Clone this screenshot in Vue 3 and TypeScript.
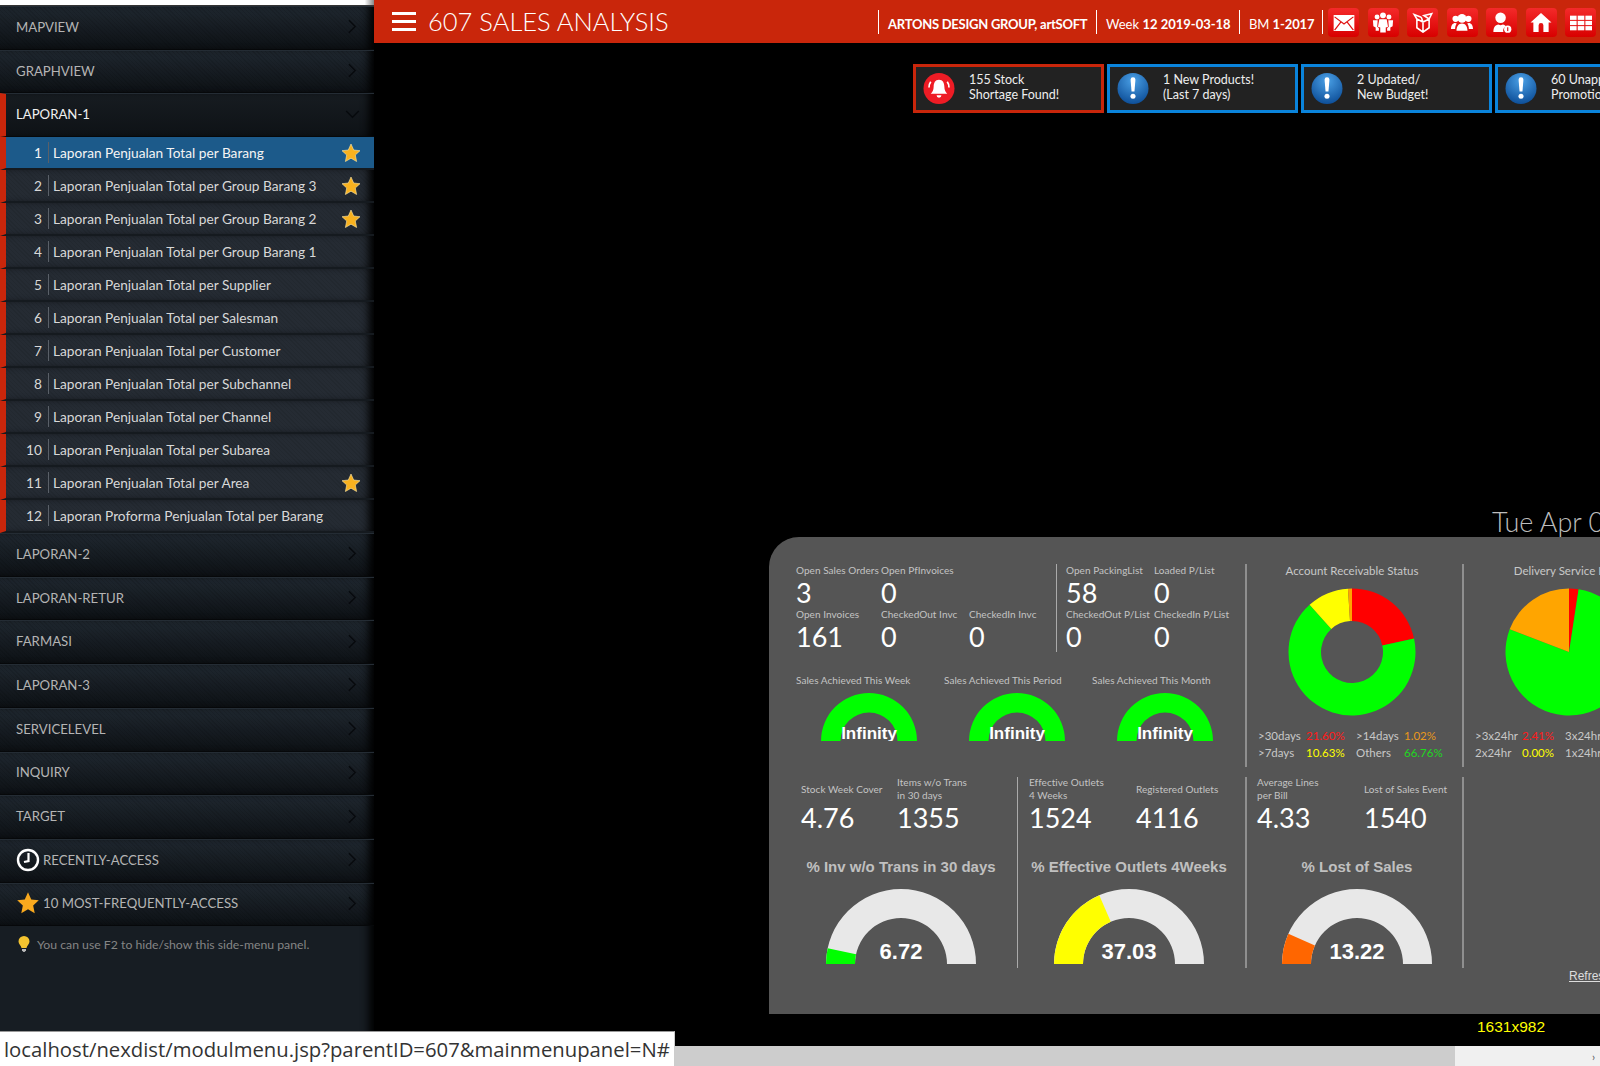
<script setup lang="ts">
interface Sub { n: number; label: string; star: boolean }
interface Stat { label: string; value: string }
const before: string[] = ['MAPVIEW', 'GRAPHVIEW']
const subs: Sub[] = [
  { n: 1, label: 'Laporan Penjualan Total per Barang', star: true },
  { n: 2, label: 'Laporan Penjualan Total per Group Barang 3', star: true },
  { n: 3, label: 'Laporan Penjualan Total per Group Barang 2', star: true },
  { n: 4, label: 'Laporan Penjualan Total per Group Barang 1', star: false },
  { n: 5, label: 'Laporan Penjualan Total per Supplier', star: false },
  { n: 6, label: 'Laporan Penjualan Total per Salesman', star: false },
  { n: 7, label: 'Laporan Penjualan Total per Customer', star: false },
  { n: 8, label: 'Laporan Penjualan Total per Subchannel', star: false },
  { n: 9, label: 'Laporan Penjualan Total per Channel', star: false },
  { n: 10, label: 'Laporan Penjualan Total per Subarea', star: false },
  { n: 11, label: 'Laporan Penjualan Total per Area', star: true },
  { n: 12, label: 'Laporan Proforma Penjualan Total per Barang', star: false },
]
const after: string[] = ['LAPORAN-2', 'LAPORAN-RETUR', 'FARMASI', 'LAPORAN-3', 'SERVICELEVEL', 'INQUIRY', 'TARGET']
const notes = [
  { a: '155 Stock', b: 'Shortage Found!', kind: 'alert' },
  { a: '1 New Products!', b: '(Last 7 days)', kind: 'info' },
  { a: '2 Updated/', b: 'New Budget!', kind: 'info' },
  { a: '60 Unapproved', b: 'Promotions!', kind: 'info' },
]
const stats1: Stat[] = [
  { label: 'Open Sales Orders', value: '3' }, { label: 'Open PfInvoices', value: '0' }, { label: '', value: '' },
  { label: 'Open Invoices', value: '161' }, { label: 'CheckedOut Invc', value: '0' }, { label: 'CheckedIn Invc', value: '0' },
]
const stats2: Stat[] = [
  { label: 'Open PackingList', value: '58' }, { label: 'Loaded P/List', value: '0' },
  { label: 'CheckedOut P/List', value: '0' }, { label: 'CheckedIn P/List', value: '0' },
]
const achieved: string[] = ['Sales Achieved This Week', 'Sales Achieved This Period', 'Sales Achieved This Month']

function polar(cx: number, cy: number, r: number, turn: number): string {
  const a = turn * Math.PI * 2
  return `${(cx + r * Math.sin(a)).toFixed(2)} ${(cy - r * Math.cos(a)).toFixed(2)}`
}
function ring(cx: number, cy: number, R: number, r: number, from: number, to: number): string {
  const large = to - from > 0.5 ? 1 : 0
  if (r === 0) return `M${cx} ${cy}L${polar(cx, cy, R, from)}A${R} ${R} 0 ${large} 1 ${polar(cx, cy, R, to)}Z`
  return `M${polar(cx, cy, R, from)}A${R} ${R} 0 ${large} 1 ${polar(cx, cy, R, to)}L${polar(cx, cy, r, to)}A${r} ${r} 0 ${large} 0 ${polar(cx, cy, r, from)}Z`
}
const donut = [
  { d: ring(64, 64, 63.5, 31, 0, 0.216), c: '#ff0000' },
  { d: ring(64, 64, 63.5, 31, 0.216, 0.8836), c: '#00ff00' },
  { d: ring(64, 64, 63.5, 31, 0.8836, 0.9899), c: '#ffff00' },
  { d: ring(64, 64, 63.5, 31, 0.9899, 1), c: '#ffa500' },
]
const pie = [
  { d: ring(64, 64, 63.5, 0, 0, 0.0241), c: '#ff0000' },
  { d: ring(64, 64, 63.5, 0, 0.0241, 0.808), c: '#00ff00' },
  { d: ring(64, 64, 63.5, 0, 0.808, 1), c: '#ffa500' },
]
const greenArc = ring(73, 49, 48, 28.5, 0.75, 1.25)
const kpis = [
  { cls: 'a', cols: [{ l: ['Stock Week Cover'], v: '4.76' }, { l: ['Items w/o Trans', 'in 30 days'], v: '1355' }], t: '% Inv w/o Trans in 30 days', val: 6.72, c: '#00ff00' },
  { cls: 'b', cols: [{ l: ['Effective Outlets', '4 Weeks'], v: '1524' }, { l: ['Registered Outlets'], v: '4116' }], t: '% Effective Outlets 4Weeks', val: 37.03, c: '#ffff00' },
  { cls: 'c', cols: [{ l: ['Average Lines', 'per Bill'], v: '4.33' }, { l: ['Lost of Sales Event'], v: '1540' }], t: '% Lost of Sales', val: 13.22, c: '#ff6600' },
]
const track = ring(75, 75, 75, 46, 0.75, 1.25)
function fill(v: number): string {
  return ring(75, 75, 75, 46, 0.75, 0.75 + v / 200)
}
const starPts = '10,1 12.7,7 19,7.7 14.3,12 15.6,18.5 10,15.2 4.4,18.5 5.7,12 1,7.7 7.3,7'
</script>

<template>
  <div class="page">
    <aside class="side">
      <div class="topstrip"></div>
      <div v-for="h in before" :key="h" class="head">
        <span>{{ h }}</span>
        <svg class="chev" viewBox="0 0 10 16"><path d="M1 1l7 7-7 7" /></svg>
      </div>
      <div class="head open">
        <span>LAPORAN-1</span>
        <svg class="chevd" viewBox="0 0 16 10"><path d="M1 1l7 7 7-7" /></svg>
      </div>
      <div v-for="s in subs" :key="s.n" class="sub" :class="{ on: s.n === 1 }">
        <span class="num">{{ s.n }}</span>
        <span class="lbl">{{ s.label }}</span>
        <svg v-if="s.star" class="star" viewBox="0 0 20 20"><polygon :points="starPts" /></svg>
      </div>
      <div v-for="h in after" :key="h" class="head">
        <span>{{ h }}</span>
        <svg class="chev" viewBox="0 0 10 16"><path d="M1 1l7 7-7 7" /></svg>
      </div>
      <div class="head iconed">
        <svg class="bigicon" viewBox="0 0 24 24"><circle cx="12" cy="12" r="10" fill="none" stroke="#fff" stroke-width="2.400" /><path d="M12.500 5v8l-4.500 1" fill="none" stroke="#fff" stroke-width="2.200" /></svg>
        <span>RECENTLY-ACCESS</span>
        <svg class="chev" viewBox="0 0 10 16"><path d="M1 1l7 7-7 7" /></svg>
      </div>
      <div class="head iconed">
        <svg class="bigicon" viewBox="0 0 20 20"><polygon class="goldfill" :points="starPts" /></svg>
        <span>10 MOST-FREQUENTLY-ACCESS</span>
        <svg class="chev" viewBox="0 0 10 16"><path d="M1 1l7 7-7 7" /></svg>
      </div>
      <div class="hint">
        <svg class="bulb" viewBox="0 0 12 16"><path d="M6 0a5.500 5.500 0 0 1 5.500 5.500c0 2.600-2.500 4-3 6.500h-5c-.5-2.500-3-3.900-3-6.500A5.500 5.500 0 0 1 6 0z" fill="#f4c430" /><path d="M4 13h4v1.500L6.500 16h-1L4 14.500z" fill="#bbb" /></svg>
        <span>You can use F2 to hide/show this side-menu panel.</span>
      </div>
    </aside>

    <main class="main">
      <header class="bar">
        <div class="burger"><i></i><i></i><i></i></div>
        <div class="title">607 SALES ANALYSIS</div>
        <div class="meta m1"><b>ARTONS DESIGN GROUP, artSOFT</b></div>
        <div class="meta m2">Week <b>12 2019-03-18</b></div>
        <div class="meta m3">BM <b>1-2017</b></div>
        <div class="tools">
          <button class="tool"><svg class="wide" viewBox="0 0 22 17"><rect x="0" y="0" width="22" height="17" fill="#fff" /><path d="M1 2l10 7.500L21 2M1 16l7-9M21 16l-7-9" fill="none" stroke="#e01010" stroke-width="1.300" /></svg></button>
          <button class="tool"><svg viewBox="0 0 24 22" fill="#fff"><circle cx="12" cy="3.200" r="3.200" /><circle cx="5.500" cy="5" r="2.700" /><circle cx="18.500" cy="5" r="2.700" /><path d="M8 7.500h8l1.500 8-2.500 1v5.500H9v-5.500l-2.500-1z" /><path d="M1 8.500h5.200l-.5 7 1.800 1.500v3H4v-3.500l-2.500-1.500zM23 8.500h-5.200l.5 7-1.800 1.500v3H20v-3.500l2.500-1.500z" /></svg></button>
          <button class="tool"><svg viewBox="0 0 22 24" fill="none" stroke="#fff" stroke-width="1.800"><path d="M4 8l7 3.500L18 8v10l-7 5-7-5zM11 11.500V23M4 8L1 3l8 3M18 8l3-6-9 2 6 4M9 6l2 5.500" /></svg></button>
          <button class="tool"><svg viewBox="0 0 24 20" fill="#fff"><circle cx="12" cy="5.500" r="4.800" /><circle cx="5" cy="6" r="3.400" /><circle cx="19" cy="6" r="3.400" /><path d="M6 19c0-5 2.500-8 6-8s6 3 6 8zM0 17c0-4 2-6.500 4.500-6.500.8 0 1.300.3 1.800.7C5 13 4.500 15 4.500 17zM24 17c0-4-2-6.500-4.500-6.500-.8 0-1.300.3-1.800.7 1.300 1.800 1.800 3.800 1.800 5.800z" /></svg></button>
          <button class="tool"><svg viewBox="0 0 20 22" fill="#fff"><circle cx="8.500" cy="6" r="5.500" /><path d="M1 21c0-4 1-7 5-8l2.500 1 2.500-1c1.500.4 2.500 1 3.200 2.100A4.500 4.500 0 0 0 11.500 21z" /><circle cx="16" cy="18" r="3.800" /><rect x="15.400" y="16" width="1.200" height="4" fill="#e01010" /></svg></button>
          <button class="tool"><svg viewBox="0 0 22 22" fill="#fff"><path d="M11 1L0 11h3v10h5.500v-7a2.500 2.500 0 0 1 5 0v7H19V11h3z" /></svg></button>
          <button class="tool"><svg class="wide" viewBox="0 0 24 16" fill="#fff"><rect x="0" y="0" width="7.200" height="4.600" /><rect x="8.400" y="0" width="7.200" height="4.600" /><rect x="16.800" y="0" width="7.200" height="4.600" /><rect x="0" y="5.700" width="7.200" height="4.600" /><rect x="8.400" y="5.700" width="7.200" height="4.600" /><rect x="16.800" y="5.700" width="7.200" height="4.600" /><rect x="0" y="11.400" width="7.200" height="4.600" /><rect x="8.400" y="11.400" width="7.200" height="4.600" /><rect x="16.800" y="11.400" width="7.200" height="4.600" /></svg></button>
        </div>
      </header>

      <section class="notes">
        <div v-for="n in notes" :key="n.a" class="note" :class="n.kind">
          <svg v-if="n.kind === 'alert'" class="nico" viewBox="0 0 32 32">
            <circle cx="16" cy="16" r="16" fill="#ee1c25" />
            <path d="M16 7c-4 0-5.500 3.500-5.500 7 0 4-1.500 6-3 7.500h17c-1.500-1.500-3-3.500-3-7.500 0-3.500-1.500-7-5.500-7zM13.500 23a2.500 2.500 0 0 0 5 0z" fill="#fff" />
            <path d="M7.500 9c-1.500 2-2 4-1.800 6M24.500 9c1.500 2 2 4 1.800 6" fill="none" stroke="#fff" stroke-width="1.800" />
          </svg>
          <svg v-else class="nico" viewBox="0 0 32 32">
            <defs><radialGradient :id="'g' + n.a.length" cx="50%" cy="25%" r="80%"><stop offset="0" stop-color="#4aa0e6" /><stop offset="1" stop-color="#0a4a94" /></radialGradient></defs>
            <circle cx="16" cy="16" r="16" :fill="'url(#g' + n.a.length + ')'" />
            <path d="M13.500 7a2.500 2.500 0 0 1 5 0l-1 12h-3z" fill="#fff" />
            <circle cx="16" cy="24" r="2.600" fill="#fff" />
          </svg>
          <div class="ntext"><div>{{ n.a }}</div><div>{{ n.b }}</div></div>
        </div>
      </section>

      <div class="date">Tue Apr 02 2019 10:24:51</div>

      <section class="panel">
        <div class="upper">
          <div class="uleft">
            <div class="stats">
              <div class="grid g1">
                <div v-for="(s, i) in stats1" :key="i" class="stat">
                  <div class="lab">{{ s.label }}</div>
                  <div class="val">{{ s.value }}</div>
                </div>
              </div>
              <div class="grid g2">
                <div v-for="s in stats2" :key="s.label" class="stat">
                  <div class="lab">{{ s.label }}</div>
                  <div class="val">{{ s.value }}</div>
                </div>
              </div>
            </div>
            <div class="achieved">
              <div v-for="a in achieved" :key="a" class="ach">
                <div class="lab">{{ a }}</div>
                <svg class="arc" viewBox="0 0 146 49">
                  <path :d="greenArc" fill="#00ff00" />
                  <text x="73" y="47" class="inf">Infinity</text>
                </svg>
              </div>
            </div>
          </div>
          <div class="chart">
            <div class="ctitle">Account Receivable Status</div>
            <svg class="pie" viewBox="0 0 128 128"><path v-for="p in donut" :key="p.c" :d="p.d" :fill="p.c" /></svg>
            <div class="legend ar">
              <span>&gt;30days</span><span class="red">21.60%</span><span>&gt;14days</span><span class="org">1.02%</span>
              <span>&gt;7days</span><span class="yel">10.63%</span><span>Others</span><span class="grn">66.76%</span>
            </div>
          </div>
          <div class="chart">
            <div class="ctitle">Delivery Service Level</div>
            <svg class="pie" viewBox="0 0 128 128"><path v-for="p in pie" :key="p.c" :d="p.d" :fill="p.c" /></svg>
            <div class="legend dl">
              <span>&gt;3x24hr</span><span class="red">2.41%</span><span>3x24hr</span><span class="org">19.20%</span>
              <span>2x24hr</span><span class="yel">0.00%</span><span>1x24hr</span><span class="grn">78.39%</span>
            </div>
          </div>
        </div>

        <div class="lower">
          <div v-for="k in kpis" :key="k.cls" class="kpi" :class="k.cls">
            <div class="kstats">
              <div v-for="c in k.cols" :key="c.v" class="kstat">
                <div class="klab"><div v-for="l in c.l" :key="l">{{ l }}</div></div>
                <div class="kval">{{ c.v }}</div>
              </div>
            </div>
            <div class="gtitle">{{ k.t }}</div>
            <svg class="gauge" viewBox="0 0 150 75">
              <path :d="track" fill="#e8e8e8" />
              <path :d="fill(k.val)" :fill="k.c" />
              <text x="75" y="69.500" class="gval">{{ k.val.toFixed(2) }}</text>
            </svg>
          </div>
          <div class="kpi last"></div>
        </div>
        <div class="refresh"><u>Refresh</u></div>
      </section>

      <div class="size">1631x982</div>
      <div class="scroll"><div class="thumb"></div><span class="arrow">›</span></div>
    </main>

    <div class="url">localhost/nexdist/modulmenu.jsp?parentID=607&amp;mainmenupanel=N#</div>
  </div>
</template>

<style>
html, body { margin: 0; background: #000; }
</style>

<style scoped>
.page { position: relative; width: 1600px; height: 1066px; overflow: hidden; display: flex; background: #000; font-family: Lato, "Noto Sans", sans-serif; }
.side { width: 374px; flex: none; height: 1066px; box-sizing: border-box; background: #171d23; box-shadow: inset -9px 0 8px -4px #000; position: relative; }
.topstrip { height: 5px; background: linear-gradient(90deg, #fff 97.500%, #888); border-bottom: 1px solid #333; }
.head { height: 43.700px; box-sizing: border-box; display: flex; align-items: center; padding: 0 17px 2px 16px; font-size: 13.200px; color: #b4b4b4; border-bottom: 1px solid #06080a; border-top: 1px solid #242c34; background: repeating-linear-gradient(45deg, rgba(0,0,0,.1) 0 1px, transparent 1px 3px), linear-gradient(#1f272f, #0d1115); box-shadow: inset -9px 0 8px -4px #000; }
.head:first-of-type { height: 42px; }
.head span { flex: 1; }
.head.open { color: #f0f0f0; border-left: 6px solid #c9260b; padding-left: 10px; background: linear-gradient(#171c21, #0e1216); }
.chev { width: 9px; height: 15px; fill: none; stroke: #070a0d; stroke-width: 1.500; }
.chevd { width: 15px; height: 9px; fill: none; stroke: #070a0d; stroke-width: 1.500; margin-right: -3px; }
.sub { height: 33px; box-sizing: border-box; display: flex; align-items: center; border-left: 6px solid #c9260b; border-bottom: 2px solid #151a1f; color: #d8d8d8; font-size: 13.700px; background: repeating-linear-gradient(45deg, rgba(0,0,0,.08) 0 1px, transparent 1px 3px), #252b33; box-shadow: inset -9px 0 8px -4px #000; padding-right: 13px; }
.sub.on { background: #1c5a8a; color: #f4f4f4; box-shadow: none; }
.num { width: 42px; text-align: right; padding-right: 6px; box-sizing: border-box; height: 21px; line-height: 21px; }
.lbl { flex: 1; border-left: 1px solid #5a6068; padding-left: 4px; height: 21px; line-height: 21px; box-sizing: border-box; }
.star { width: 20px; height: 20px; fill: #f9b21f; stroke: #ffe9a8; stroke-width: .6; }
.iconed span { padding-left: 3px; }
.bigicon { width: 24px; height: 24px; flex: none; }
.goldfill { fill: #f9a91e; }
.hint { display: flex; align-items: center; margin: 10px 0 0 18px; font-size: 12.250px; color: #858585; gap: 7px; }
.bulb { width: 12px; height: 16px; }

.main { width: 1226px; flex: none; display: flex; flex-direction: column; height: 1066px; overflow: hidden; }
.bar { height: 43px; flex: none; background: #c9260b; display: flex; align-items: center; color: #fff; }
.burger { width: 24px; margin-left: 18px; display: flex; flex-direction: column; gap: 4.500px; }
.burger i { display: block; height: 3.500px; background: #fff; }
.title { width: 450px; margin-left: 12px; padding-bottom: 1px; font-size: 25.500px; font-weight: 300; white-space: nowrap; }
.meta { height: 24px; line-height: 28px; border-left: 1px solid #fff; padding: 0 9px; font-size: 13px; white-space: nowrap; }
.meta.m1 { width: 199px; letter-spacing: -.25px; }
.meta.m2 { width: 124px; }
.meta.m3 { width: 64px; letter-spacing: -.1px; }
.tools { display: flex; gap: 8.500px; border-left: 1px solid #fff; height: 24px; align-items: center; padding-left: 5px; }
.tool { width: 31px; height: 29px; flex: none; border: 0; padding: 0; margin-top: 2px; border-radius: 4px; background: linear-gradient(#f42a2a, #d80000); display: flex; align-items: center; justify-content: center; }
.tool svg { width: 22px; height: 21px; }
.tool svg.wide { height: 16px; }

.notes { display: flex; gap: 3px; margin: 21px 0 0 539px; flex: none; }
.note { width: 191px; height: 49px; flex: none; box-sizing: border-box; background: #222; border: 3px solid #0a84dc; display: flex; align-items: center; color: #eee; font-size: 12.500px; line-height: 15px; }
.note.alert { border-color: #c9260b; }
.nico { width: 32px; height: 31px; margin-left: 7px; flex: none; }
.ntext { margin-left: 14px; white-space: nowrap; padding-bottom: 4px; }

.date { margin: 394px 0 0 1118px; height: 30px; line-height: 30px; font-size: 27px; font-weight: 300; color: #bdbdbd; white-space: nowrap; flex: none; }

.panel { margin-left: 395px; width: 1000px; height: 477px; flex: none; box-sizing: border-box; background: #555; border-top-left-radius: 30px; padding: 27px 0 0 27px; }
.upper { display: flex; height: 203px; }
.uleft { width: 449px; flex: none; }
.stats { display: flex; height: 88px; }
.grid { display: grid; grid-auto-rows: 44.300px; }
.g1 { grid-template-columns: 85px 88px 87px; width: 260px; }
.g2 { grid-template-columns: 88px 91px; padding-left: 9px; border-left: 1px solid #aaa; }
.lab { font-size: 10px; line-height: 12px; height: 13px; color: #c4c4c4; white-space: nowrap; letter-spacing: .05px; }
.val { font-size: 27px; line-height: 31px; height: 31px; color: #fff; }
.achieved { display: flex; margin-top: 22px; }
.ach { width: 148px; flex: none; }
.arc { display: block; width: 146px; height: 49px; margin-top: 5px; }
.inf { font: bold 17px "Liberation Sans", sans-serif; fill: #fff; text-anchor: middle; }
.chart { width: 217px; flex: none; box-sizing: border-box; border-left: 2px solid #8f8f8f; padding-left: 11px; }
.ctitle { width: 188px; text-align: center; font-size: 11.500px; line-height: 14px; color: #c8c8c8; white-space: nowrap; }
.pie { display: block; width: 128px; height: 128px; margin: 10px 0 0 30px; }
.legend { display: grid; margin-top: 11px; font-size: 11.500px; line-height: 17px; color: #c8c8c8; white-space: nowrap; }
.legend.ar { grid-template-columns: 48px 50px 48px 60px; }
.legend.dl { grid-template-columns: 47px 43px 48px 60px; }
.red { color: #ff1a1a; } .org { color: #e8981b; } .yel { color: #ffff00; } .grn { color: #1fd81f; }

.lower { display: flex; height: 191px; margin-top: 10px; }
.kpi { flex: none; box-sizing: border-box; }
.kpi.a { width: 221px; }
.kpi.b { width: 228px; border-left: 1px solid #aaa; }
.kpi.c { width: 217px; border-left: 2px solid #8f8f8f; }
.kpi.last { width: 100px; border-left: 2px solid #8f8f8f; }
.kstats { display: flex; height: 55px; }
.kpi.a .kstats { padding-left: 5px; }
.kpi.b .kstats { padding-left: 11px; }
.kpi.c .kstats { padding-left: 10px; }
.kstat { width: 96px; flex: none; }
.kpi.b .kstat, .kpi.c .kstat { width: 107px; }
.klab { height: 24px; margin-bottom: 1px; display: flex; flex-direction: column; justify-content: center; font-size: 10px; line-height: 13px; color: #c4c4c4; white-space: nowrap; letter-spacing: .05px; }
.kval { font-size: 27px; line-height: 32px; height: 30px; color: #fff; }
.gtitle { height: 20px; margin-top: 25px; width: 210px; text-align: center; font: bold 15px/20px "Liberation Sans", sans-serif; color: #c0c0c0; white-space: nowrap; }
.kpi.b .gtitle { width: 222px; }
.kpi.c .gtitle { width: 220px; }
.gauge { display: block; width: 150px; height: 75px; margin: 12px 0 0 30px; }
.kpi.b .gauge { margin-left: 36px; }
.kpi.c .gauge { margin-left: 35px; }
.gval { font: bold 22px "Liberation Sans", sans-serif; fill: #fff; text-anchor: middle; }
.refresh { margin: 1px 0 0 773px; font: 12px/14px "Liberation Sans", sans-serif; color: #ddd; }

.size { height: 32px; margin-left: 1103px; color: #ffff00; font: 15.500px/26px "Liberation Sans", sans-serif; flex: none; }
.scroll { height: 20px; flex: none; background: #f0f0f0; display: flex; align-items: center; position: relative; }
.thumb { width: 1081px; height: 20px; background: #cdcdcd; }
.arrow { position: absolute; right: 5px; font-size: 11px; color: #555; }
.url { position: absolute; left: 0; bottom: 0; width: 675px; height: 35px; box-sizing: border-box; background: #fff; border-top: 1px solid #999; border-right: 1px solid #ccc; padding-left: 4px; line-height: 35px; font-family: "Open Sans", sans-serif; font-size: 20.300px; color: #333; white-space: nowrap; overflow: hidden; }
</style>
